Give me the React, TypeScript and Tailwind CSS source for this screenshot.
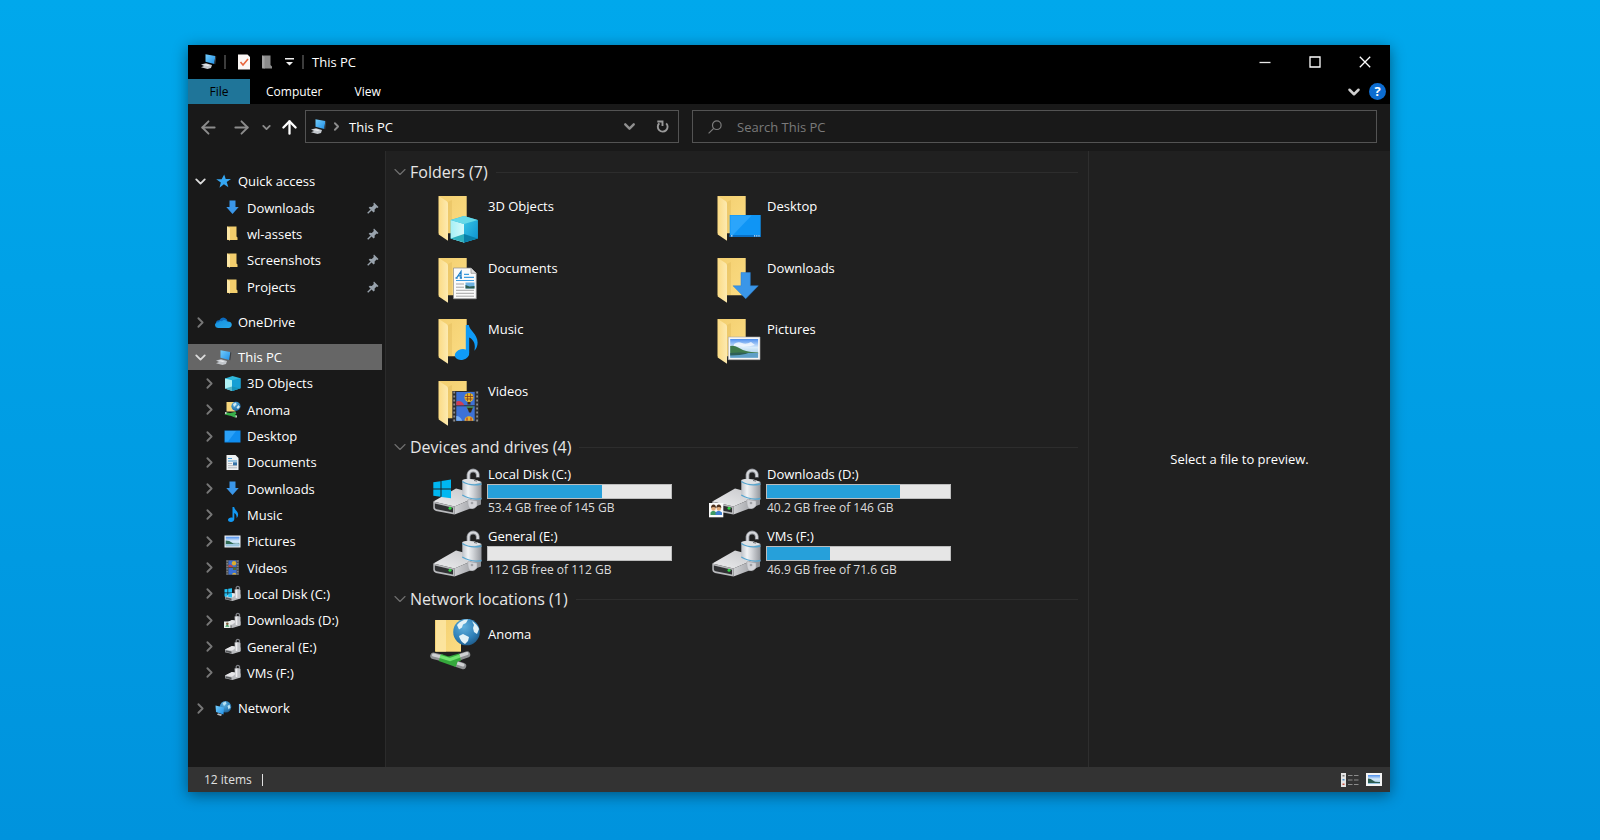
import { useState } from 'react';
import type { ReactNode } from 'react';
import { ArrowLeft, ArrowRight, ArrowUp, ChevronDown, ChevronRight } from 'lucide-react';

type IconName =
  | 'star'
  | 'arrow'
  | 'folder'
  | 'cloud'
  | 'pc'
  | 'cube'
  | 'share'
  | 'desktop'
  | 'document'
  | 'music'
  | 'picture'
  | 'video'
  | 'driveC'
  | 'driveD'
  | 'drive'
  | 'network';

type TreeItem = {
  label: string;
  icon: IconName;
  pinned?: boolean;
};

type TreeGroup = TreeItem & {
  open: boolean;
  height: string;
  children: TreeItem[];
};

const tree: TreeGroup[] = [
  {
    label: 'Quick access',
    icon: 'star',
    open: true,
    height: 'h-[132px]',
    children: [
      { label: 'Downloads', icon: 'arrow', pinned: true },
      { label: 'wl-assets', icon: 'folder', pinned: true },
      { label: 'Screenshots', icon: 'folder', pinned: true },
      { label: 'Projects', icon: 'folder', pinned: true },
    ],
  },
  { label: 'OneDrive', icon: 'cloud', open: false, height: 'h-[26px]', children: [] },
  {
    label: 'This PC',
    icon: 'pc',
    open: true,
    height: 'h-[342px]',
    children: [
      { label: '3D Objects', icon: 'cube' },
      { label: 'Anoma', icon: 'share' },
      { label: 'Desktop', icon: 'desktop' },
      { label: 'Documents', icon: 'document' },
      { label: 'Downloads', icon: 'arrow' },
      { label: 'Music', icon: 'music' },
      { label: 'Pictures', icon: 'picture' },
      { label: 'Videos', icon: 'video' },
      { label: 'Local Disk (C:)', icon: 'driveC' },
      { label: 'Downloads (D:)', icon: 'driveD' },
      { label: 'General (E:)', icon: 'drive' },
      { label: 'VMs (F:)', icon: 'drive' },
    ],
  },
  { label: 'Network', icon: 'network', open: false, height: 'h-[26px]', children: [] },
];

const folders: { label: string; art: ReactNode }[] = [
  { label: '3D Objects', art: <CubeArt /> },
  { label: 'Desktop', art: <DesktopArt /> },
  { label: 'Documents', art: <DocumentArt /> },
  { label: 'Downloads', art: <path d="M34 18.5h9.3v13.3h8L38.700 44.800 26 31.800h8z" fill="#3a96e8" stroke="#2b7fd0" strokeWidth=".5" /> },
  { label: 'Music', art: <MusicArt /> },
  { label: 'Pictures', art: <PictureArt /> },
  { label: 'Videos', art: <VideoArt /> },
];

const drives = [
  { label: 'Local Disk (C:)', detail: '53.4 GB free of 145 GB', used: 62.5, badge: 'windows' },
  { label: 'Downloads (D:)', detail: '40.2 GB free of 146 GB', used: 72.6, badge: 'shared' },
  { label: 'General (E:)', detail: '112 GB free of 112 GB', used: 0, badge: '' },
  { label: 'VMs (F:)', detail: '46.9 GB free of 71.6 GB', used: 34.5, badge: '' },
];

function Gradients() {
  return (
    <svg width="0" height="0" className="absolute" aria-hidden="true">
      <defs>
        <linearGradient id="folderBack" x1="0" y1="0" x2="1" y2="1">
          <stop offset="0" stopColor="#f3cf70" />
          <stop offset="1" stopColor="#fbdc83" />
        </linearGradient>
        <linearGradient id="folderFlap" x1="0" y1="0" x2="1" y2="0">
          <stop offset="0" stopColor="#fbdb85" />
          <stop offset="1" stopColor="#fdeab0" />
        </linearGradient>
        <linearGradient id="cubeLeft" x1="0" y1="0" x2="1" y2="0">
          <stop offset="0" stopColor="#a5f0f6" />
          <stop offset="1" stopColor="#d6fafa" />
        </linearGradient>
        <linearGradient id="cubeRight" x1="0" y1="0" x2="1" y2="1">
          <stop offset="0" stopColor="#37c3e4" />
          <stop offset="1" stopColor="#0b90cf" />
        </linearGradient>
        <linearGradient id="steelTop" x1="0" y1="1" x2="1" y2="0">
          <stop offset="0" stopColor="#ececee" />
          <stop offset="1" stopColor="#c4c5c8" />
        </linearGradient>
        <linearGradient id="steelSide" x1="0" y1="0" x2="1" y2="0">
          <stop offset="0" stopColor="#d0d1d4" />
          <stop offset="1" stopColor="#8f9196" />
        </linearGradient>
        <linearGradient id="lockBody" x1="0" y1="0" x2="1" y2="0">
          <stop offset="0" stopColor="#bfc3c9" />
          <stop offset=".3" stopColor="#f1f3f5" />
          <stop offset=".55" stopColor="#d3d6da" />
          <stop offset="1" stopColor="#94979d" />
        </linearGradient>
        <radialGradient id="globe" cx=".4" cy=".3" r=".8">
          <stop offset="0" stopColor="#5fb0dd" />
          <stop offset=".6" stopColor="#2f80b8" />
          <stop offset="1" stopColor="#1c5583" />
        </radialGradient>
        <linearGradient id="sky" x1="0" y1="0" x2="0" y2="1">
          <stop offset="0" stopColor="#4d8fee" />
          <stop offset=".45" stopColor="#d9ecfb" />
          <stop offset="1" stopColor="#8fc0de" />
        </linearGradient>
        <linearGradient id="screen" x1="0" y1="0" x2="1" y2="1">
          <stop offset="0" stopColor="#75cdfb" />
          <stop offset="1" stopColor="#1f8fe6" />
        </linearGradient>
        <linearGradient id="cloudFront" x1="0" y1="0" x2="1" y2="1">
          <stop offset="0" stopColor="#1490df" />
          <stop offset="1" stopColor="#28a8ea" />
        </linearGradient>
      </defs>
    </svg>
  );
}

function FolderArt() {
  return (
    <>
      <path d="M10.700 4H38.700V41.300H10.700z" fill="url(#folderBack)" />
      <path d="M20 10l4-2v33h-4z" fill="#dcb452" opacity=".35" />
      <path d="M10.700 4L18.500 9Q20 10 20 12V48.700L10.700 42.500z" fill="url(#folderFlap)" />
    </>
  );
}

function CubeArt() {
  return (
    <>
      <path d="M36 24L49.700 28v18.500L36 50.500 22.700 46.500V28z" fill="#2cb5d8" />
      <path d="M22.700 28L36 32v18.500l-13.300-4z" fill="url(#cubeLeft)" />
      <path d="M49.700 28L36 32v18.500l13.700-4z" fill="url(#cubeRight)" />
      <path d="M36 24l13.700 4L36 32 22.700 28z" fill="#66d9e8" />
      <path d="M22.700 46.500L36 42v8.500z" fill="#2fb0bd" />
      <path d="M49.700 46.500L36 42v8.500z" fill="#0a7fa8" />
    </>
  );
}

function DesktopArt() {
  return (
    <>
      <path d="M22.700 23h31v22h-31z" fill="#0f95f5" />
      <path d="M23.500 23.500h21L26 43h-2.500z" fill="#2ba5fb" />
      <path d="M22.700 43h31v2h-31z" fill="#0a6fc4" />
      <path d="M24 43.300h1.500v1.200H24zM47 43.300h1.200v1.200H47zM49.200 43.300h1.200v1.200h-1.200zM51.400 43.300h1.200v1.200h-1.200z" fill="#d5ecff" />
    </>
  );
}

function DocumentArt() {
  return (
    <>
      <path d="M25.500 14H43l5.300 5.300V44.800H25.500z" fill="#fbfbfb" stroke="#8c8c8c" strokeWidth=".7" />
      <path d="M43 14v5.300h5.300" fill="#dedede" stroke="#8c8c8c" strokeWidth=".7" />
      <path d="M28.500 24l4.500-6.500V24M30 21.800h3M27.500 24h2.200M31.800 24h2.200" fill="none" stroke="#1d7fc9" strokeWidth="1.300" />
      <path d="M36 20.300h5M36 23.400h10M28 26.500h18" stroke="#3f9de0" strokeWidth="1.200" />
      <path d="M28 30h8M28 33.200h8M28 36.300h18M28 39.300h18M28 42.200h18" stroke="#a5a5a5" strokeWidth="1" />
      <path d="M37.500 28.500H46.500v6h-9z" fill="#6fb2e2" />
      <path d="M37.500 31l4 1.500 5-.5v2.500h-9z" fill="#2d5c4e" />
    </>
  );
}

function MusicArt() {
  return (
    <g fill="#0f9bf7">
      <ellipse cx="34" cy="39.500" rx="7.300" ry="5.300" transform="rotate(-12 34 39.500)" />
      <path d="M37.800 10h3c.4 5 8.700 9 8.800 17.500 0 3-1 6-3.200 8.300 1.200-5.500.2-10.600-5.200-13.300V38h-3.400z" />
    </g>
  );
}

function PictureArt() {
  return (
    <>
      <path d="M21.300 22H53V44.700H21.300z" fill="#f6f6f6" stroke="#a9a9a9" strokeWidth=".6" />
      <path d="M23.200 24h27.900v18.700H23.200z" fill="url(#sky)" />
      <path d="M27 29q4-3 8-1t9-1l4 3q-8 3-21 1z" fill="#fff" opacity=".75" />
      <path d="M23.200 31q4-1 8 1.500t8 3.500 12 1.500v1H23.200z" fill="#3f7a4c" />
      <path d="M23.200 38h27.900v4.700H23.200z" fill="#5f9fc6" />
      <path d="M23.200 38q12-1 18 .5-8 2-18 2z" fill="#2e5f56" />
    </>
  );
}

function VideoArt() {
  return (
    <>
      <path d="M24.300 14H51v30.300H24.300z" fill="#2e2e2e" />
      <path d="M26.200 14.500v30M49.100 14.500v30" stroke="#8b8b8b" strokeWidth="1.800" strokeDasharray="2 2" />
      <path d="M28.300 15h18.400v13.200H28.300zM28.300 29.200h18.400v14.600H28.300z" fill="#3e72d6" />
      <path d="M28.300 24.500q5-2 8 3.700h-8z" fill="#d13f55" />
      <circle cx="41" cy="20.500" r="4.500" fill="#e8b526" />
      <path d="M37 19.500h8M37.500 22h7" stroke="#a2442c" strokeWidth="1.200" />
      <path d="M39.500 16.500v7.500M42.500 16.500v7.500" stroke="#704a14" strokeWidth=".7" />
      <path d="M39.500 25h3v2.500h-3z" fill="#4a2d12" />
      <path d="M38.500 29.200h7q0 3-3.500 5-3.500-2-3.500-5z" fill="#42804b" />
      <path d="M39.500 31h5l-1.500 4.500h-2z" fill="#38280f" />
      <path d="M36.500 43.800a4.500 4.500 0 0 1 9 0z" fill="#e8b526" />
      <path d="M39 40.500v3.300M43 40.500v3.300" stroke="#b5352c" strokeWidth="1.200" />
      <path d="M28.300 39q4 0 6 4.800h-6z" fill="#7ab0f2" />
    </>
  );
}

function DriveArt({ badge }: { badge: string }) {
  return (
    <>
      {/* enclosure */}
      <path d="M5.300 35.500L28 22.500l25 6.500L26.500 40.500z" fill="url(#steelTop)" />
      <path d="M5.300 35.500l21.200 5v8L8 45q-2.700-.8-2.700-3z" fill="#b9babd" />
      <path d="M6.800 37.500l18.200 4.300v4.700L8.500 43.200q-1.700-.5-1.700-2z" fill="#2f3032" />
      <path d="M26.500 40.500L53 29v9.500L26.500 48.500z" fill="url(#steelSide)" />
      <circle cx="22" cy="42.300" r="1.500" fill="#2fd443" />
      {/* padlock */}
      <path d="M40.500 17V8.500a4.700 4.700 0 0 1 9.300 0V11.500" fill="none" stroke="#85888e" strokeWidth="3.800" />
      <path d="M40.500 17V8.500a4.700 4.700 0 0 1 9.300 0V11" fill="none" stroke="#d6d8dc" strokeWidth="2.200" />
      <path d="M34.300 14q9-2.500 19.200 2v17.500q-10 2-19.200-3.500z" fill="url(#lockBody)" />
      <path d="M34.300 14q9-2.500 19.200 2-3 2.500-10 1.500t-9.200-3.500z" fill="#dfe2e5" />
      <path d="M46 14.500l3 .6" stroke="#6b6e73" strokeWidth="1" />
      <path d="M34.300 15.500q8 5 19.200 2.500M34.300 29q9 5.500 19.200 3.500" fill="none" stroke="#56a5cf" strokeWidth="1.300" />
      <path d="M40 33.500l9 1.500v5q-3 4-7 2.500-2.500-2-2-9z" fill="#d3d4d8" stroke="#a2a4a8" strokeWidth=".5" />
      <circle cx="44" cy="37" r="1.300" fill="#a0a2a6" />
      {badge === 'windows' && (
        <path d="M5.300 16.200l7.200-1v7.300H5.300zM13.500 15l9.500-1.400v8.900h-9.500zM5.300 23.500h7.200v7.300l-7.200-1zM13.500 23.500H23v8.700l-9.500-1.300z" fill="#00b7f1" />
      )}
      {badge === 'shared' && (
        <>
          <path d="M2 37h14.300v14.300H2z" fill="#fafafa" />
          <path d="M3.500 49v-2.500q2.500-3.500 6 0V49z" fill="#3f9a62" />
          <path d="M8.500 49v-2.500q3-3.500 6.500 0V49z" fill="#3f7fd0" />
          <circle cx="6.500" cy="42.500" r="2.300" fill="#e0ac7d" />
          <circle cx="11.800" cy="42.500" r="2.300" fill="#e0ac7d" />
          <path d="M4 42q0-3.500 2.500-3.500T9 42q-2.500-2-5 0zM9.300 42q0-3.500 2.500-3.500t2.500 3.500q-2.500-2-5 0z" fill="#4b2f1c" />
        </>
      )}
    </>
  );
}

function NetworkFolderArt() {
  return (
    <>
      <path d="M7 1h26v31.700H7z" fill="url(#folderBack)" />
      <path d="M8 1h10v31.700H8z" fill="#fde9ac" opacity=".7" />
      <circle cx="38.500" cy="13" r="13.300" fill="url(#globe)" />
      <path d="M29 6q5-6 11-5.500l-2 3.500-3 1.500-1 3-3 2zM31 17l4-2 6 3-1 4-3 3q-5-3-6-8zM44 2q5 3 7 8l-2 5-3-2-1-4 1-3z" fill="#e2f2f7" />
      <path d="M5.500 36.800l7 1.700M32 37.800l7-2.300M29 45l6 2" stroke="#8e9092" strokeWidth="6.500" strokeLinecap="round" />
      <path d="M5.500 36l7 1.700M32 36.800l7-2.300M29 44l6 2" stroke="#cfd1d3" strokeWidth="3" strokeLinecap="round" />
      <path d="M12 38.500l17 6M20 41.500l12-3.500" stroke="#35a83c" strokeWidth="7.500" fill="none" />
      <path d="M12 37.500l10 3 10-3.500" stroke="#6fe26e" strokeWidth="3.200" fill="none" />
    </>
  );
}

const smallIcons: Record<IconName, ReactNode> = {
  star: <path d="M9.200 1.500l1.500 4.600 5.300-.2-4.300 3.200 1.700 5.100-4.500-2.900-4.400 3.400 1.300-5.300L1.200 6.300l5.400-.1z" fill="#35a7f3" />,
  arrow: <path d="M5.500 1.500h6v6.500h3.200l-6.200 7-6.200-7h3.200z" fill="#3a96e8" />,
  folder: (
    <>
      <path d="M3 1.500h9.500v10l1 1v2.500H3z" fill="#f2cd6c" />
      <path d="M3 1.500l3 1.700v12.500L3 14z" fill="#fce6a4" />
    </>
  ),
  cloud: (
    <>
      <path d="M1 9.500Q1 6 4.300 6.300 6.500 2.500 10 4q2.500 1 2.700 4z" fill="#0b6bbf" />
      <path d="M3 14q-3.200-.5-3-3.500Q.5 8 3.500 8.200 5 6.500 7 7.300q2-2.500 5 .2 4.500-.3 4.800 3.200-.2 3-3.300 3.300z" fill="url(#cloudFront)" />
    </>
  ),
  pc: (
    <>
      <path d="M5.500 1.200l9.800 1.900-1 8-8.800-2.300z" fill="url(#screen)" />
      <path d="M15.300 3.100l1 .7-1 7.500-1-.2z" fill="#3b3f45" />
      <path d="M1 11.500l5-1.200 6 1.600-1 3-3.500 1L1 14.300l3-1.300z" fill="#c3c7cc" />
      <path d="M3 11.800l3-.6 4 1-2.500.8z" fill="#eceef0" />
    </>
  ),
  cube: (
    <>
      <path d="M1 3.500L8.500 1l8 2.300v10l-8 2.700L1 13.500z" fill="#2fb8dc" />
      <path d="M1 3.500l7 1.800V16l-7-2.500z" fill="#aef1f5" />
      <path d="M16.500 3.300L8 5.300V16l8.500-2.700z" fill="#159fd5" />
      <path d="M1 13.500l7-2 8.500 2L8 16z" fill="#168ba8" opacity=".6" />
    </>
  ),
  share: (
    <>
      <path d="M2.500 1h9v9.500h-9z" fill="#f6d67d" />
      <circle cx="12" cy="5.300" r="4.600" fill="url(#globe)" />
      <path d="M9 3l3-1.500.5 2L10 6zM12.500 6.500l2-2.500 1.500 2-2 2z" fill="#d2eaf4" />
      <path d="M1 12.200l5 1.300 6-1.600M7 13.500l5 2" stroke="#37b04a" strokeWidth="2.500" fill="none" />
      <path d="M1 12h1.500M11.500 15.500H13" stroke="#c9c9c9" strokeWidth="2" />
    </>
  ),
  desktop: (
    <>
      <path d="M.5 2.500h16v12H.5z" fill="#0f8def" />
      <path d="M1 3h11L4 13.500H1z" fill="#2ba1f8" />
    </>
  ),
  document: (
    <>
      <path d="M2.500 1h9l3 3v12h-12z" fill="#eef1f3" />
      <path d="M4 4.500h4M4 7h9" stroke="#4a9fd6" strokeWidth="1.200" />
      <path d="M4 9.500h4M4 11.700h9M4 13.800h9" stroke="#a9b0b5" strokeWidth=".9" />
      <path d="M9 8.300h4v3H9z" fill="#3573a8" />
    </>
  ),
  music: <path d="M8.500 1h1.700c.2 3 3.900 4.300 3.900 7.500 0 1.400-.5 2.500-1.500 3.700.2-2.500-.4-4.200-2.300-5.200V13c0 1.800-1.600 3-3.300 3S4 15.200 4 13.800s1.500-2.400 3.200-2.400c.5 0 .9.100 1.300.3z" fill="#1299f4" />,
  picture: (
    <>
      <path d="M.5 2.500h16v12H.5z" fill="#eef2f6" />
      <path d="M1.700 3.700h13.600v9.600H1.700z" fill="url(#sky)" />
      <path d="M1.700 7.500q4 0 6 2t7.600 1v1H1.700z" fill="#2f6b55" />
      <path d="M1.700 11h13.600v2.300H1.700z" fill="#9cc6df" />
    </>
  ),
  video: (
    <>
      <path d="M2 1h13v15H2z" fill="#4b4b4b" />
      <path d="M3.200 1.500v14M13.800 1.500v14" stroke="#8a8a8a" strokeWidth="1.300" strokeDasharray="1.300 1.300" />
      <path d="M4.500 1.500h8v6.500h-8zM4.500 9h8v6.500h-8z" fill="#3c6fd0" />
      <circle cx="10" cy="4.300" r="2.200" fill="#dcae2d" />
      <path d="M4.500 6q3-1 5 2h-5z" fill="#c9433f" />
      <path d="M8 15.500a2.300 2.300 0 0 1 4.500 0z" fill="#dcae2d" />
      <path d="M9 8.500h3v2.500H9z" fill="#4d6b34" />
    </>
  ),
  driveC: (
    <>
      <SmallDrive />
      <path d="M.5 4.300l3-.4v3.600h-3zM4.200 3.800l3.800-.5v4.200H4.200zM.5 8.200h3v3.600l-3-.4zM4.200 8.200H8v4.200l-3.800-.5z" fill="#22c1f5" />
    </>
  ),
  driveD: (
    <>
      <SmallDrive />
      <path d="M0 9.500h6.500V16H0z" fill="#e9efe9" />
      <path d="M1.200 14.700q2-4 4.200 0z" fill="#3f9a62" />
      <circle cx="3.300" cy="11.700" r="1.300" fill="#7a5637" />
    </>
  ),
  drive: <SmallDrive />,
  network: (
    <>
      <circle cx="10.500" cy="6.800" r="5.800" fill="url(#globe)" />
      <path d="M7.500 3l3-1.500 1 2L9 6zM12.500 6l2-1.500 1 3-2 2z" fill="#b9e3f4" />
      <path d="M.5 5.500l8.500 2-.5 7L1 12z" fill="url(#screen)" />
      <path d="M3 13.200l4 1.300-1 1.500-4-1.200z" fill="#b5bcc2" />
    </>
  ),
};

function SmallDrive() {
  return (
    <>
      <path d="M1 11.500L8 8l8.500 1.500v4L8.500 16 1 14.300z" fill="#b9bbbe" />
      <path d="M1 11.500L8 8l5 1-5 3.700z" fill="#e6e6e8" />
      <path d="M1.500 12.300l6 1.200v1.700l-6-1.300z" fill="#55575a" />
      <path d="M12.200 5V2.700a1.700 1.700 0 0 1 3.300 0V5" fill="none" stroke="#808287" strokeWidth="1.300" />
      <path d="M10.500 4.500q3-1 6 .5v8q-3 1.500-5.500-.5z" fill="#c0c2c6" />
      <path d="M11.500 5h1.800v8h-1.500z" fill="#ededef" />
    </>
  );
}

function SmallIcon({ name }: { name: IconName }) {
  return (
    <svg width="17" height="17" viewBox="0 0 17 17" className="shrink-0" aria-hidden="true">
      {smallIcons[name]}
    </svg>
  );
}

function TileIcon({ children }: { children: ReactNode }) {
  return (
    <svg width="56" height="52" viewBox="0 0 56 52" className="shrink-0" aria-hidden="true">
      {children}
    </svg>
  );
}

function Pin() {
  return (
    <svg width="12" height="12" viewBox="0 0 12 12" className="mr-[3px] ml-auto shrink-0" aria-hidden="true">
      <path d="M7 .5L11.500 5l-1 .9-.9-.3-2 2 .1 2-1.100 1L1.700 5.800l1.100-1 2 .1 2-2-.4-1.300z" fill="#98a2ac" />
      <path d="M4.300 7.700L.7 11.300" stroke="#98a2ac" strokeWidth="1.400" />
    </svg>
  );
}

type TreeRowProps = {
  item: TreeItem;
  level: 0 | 1;
  open?: boolean;
  selected: boolean;
  onSelect: () => void;
};

function TreeRow({ item, level, open, selected, onSelect }: TreeRowProps) {
  return (
    <button
      onClick={onSelect}
      className={`mr-[3px] flex min-h-0 items-center text-left ${level === 0 ? 'pl-1' : 'pl-[13px]'} ${
        selected ? 'bg-[#666666]' : 'hover:bg-[#2a2a2a]'
      }`}
    >
      <span className="mr-[7px] flex w-4 shrink-0 justify-center">
        {open && <ChevronDown size={17} strokeWidth={2.6} className="shrink-0 text-[#dcdcdc]" />}
        {!open && !item.pinned && <ChevronRight size={17} strokeWidth={2.6} className="shrink-0 text-[#777777]" />}
      </span>
      <SmallIcon name={item.icon} />
      <span className="ml-1.5 whitespace-nowrap">{item.label}</span>
      {item.pinned && <Pin />}
    </button>
  );
}

type SectionProps = {
  title: string;
  height: string;
  children: ReactNode;
};

function Section({ title, height, children }: SectionProps) {
  return (
    <section>
      <h2 className="flex h-[26px] items-center text-base text-[#e6e6e6]">
        <ChevronDown size={20} strokeWidth={1.4} className="shrink-0 text-[#6e6e6e]" />
        <span className="whitespace-nowrap">{title}</span>
        <span className="ml-2 h-px flex-1 bg-[#2d2d2d]" />
      </h2>
      <div className={`mt-[3px] ml-[38px] grid auto-rows-fr grid-cols-[repeat(auto-fill,279px)] ${height}`}>
        {children}
      </div>
    </section>
  );
}

export default function App() {
  const [selected, setSelected] = useState('This PC');
  const [search, setSearch] = useState('');

  return (
    <div className="flex min-h-screen flex-col bg-linear-to-b from-[#00a8ec] to-[#0093dd] pt-[45px] pr-[210px] pb-12 pl-[188px] font-['Open_Sans','Noto_Sans',sans-serif] text-[13px] leading-4 text-white">
      <Gradients />
      <div className="flex flex-1 flex-col bg-[#191919] shadow-[0_3px_14px_rgba(0,0,0,0.45)]">
        <header className="bg-black">
          <div className="flex h-[34px] items-center pb-px pl-3">
            <SmallIcon name="pc" />
            <span className="ml-[7px] h-[14px] w-0.5 bg-[#3c3c3c]" />
            <button aria-label="Properties" className="ml-3">
              <svg width="12" height="16" viewBox="0 0 12 16">
                <path d="M0 .5h9.500l2.500 2.500v12.500H0z" fill="#fbf7f5" />
                <path d="M2.500 8l2.500 3 5-6" fill="none" stroke="#e8663c" strokeWidth="1.600" />
              </svg>
            </button>
            <button aria-label="New folder" className="ml-3">
              <svg width="11" height="14" viewBox="0 0 11 14">
                <path d="M0 .5h8.500v9.500l1.500 1.500v2H0z" fill="#8a8a8a" />
                <path d="M0 .5l2.500 1.300v12L0 12.500z" fill="#a3a3a3" />
              </svg>
            </button>
            <button aria-label="Customize Quick Access Toolbar" className="ml-3">
              <svg width="9" height="8" viewBox="0 0 9 8">
                <path d="M0 0h9v1.500H0zM1 4h7L4.500 7.500z" fill="#f0f0f0" />
              </svg>
            </button>
            <span className="mx-2 h-[14px] w-0.5 bg-[#3c3c3c]" />
            <h1>This PC</h1>
            <div className="ml-auto flex h-full">
              <button aria-label="Minimize" className="flex w-[50px] items-center justify-center">
                <svg width="12" height="12" viewBox="0 0 12 12" stroke="#e8e8e8" strokeWidth="1.300">
                  <path d="M.5 6.500h11" />
                </svg>
              </button>
              <button aria-label="Maximize" className="flex w-[50px] items-center justify-center">
                <svg width="12" height="12" viewBox="0 0 12 12" fill="none" stroke="#fff" strokeWidth="1.300">
                  <path d="M1 1h10v10H1z" />
                </svg>
              </button>
              <button aria-label="Close" className="flex w-[50px] items-center justify-center">
                <svg width="12" height="12" viewBox="0 0 12 12" stroke="#fff" strokeWidth="1.300">
                  <path d="M.8.800l10.400 10.400M11.200.8L.8 11.200" />
                </svg>
              </button>
            </div>
          </div>
          <nav className="flex h-[25px] items-center text-xs">
            <button className="h-full w-[62px] bg-[#1f7599] text-black">File</button>
            <button className="ml-4">Computer</button>
            <button className="ml-8">View</button>
            <button aria-label="Expand the Ribbon" className="ml-auto">
              <ChevronDown size={18} strokeWidth={3.4} className="text-[#cfcfcf]" />
            </button>
            <button
              aria-label="Help"
              className="mr-1 ml-[6px] h-[17px] w-[17px] rounded-full bg-[#0c6cd0] text-[13px] font-bold"
            >
              ?
            </button>
          </nav>
        </header>

        <div className="flex h-[47px] items-start bg-[#191919] pt-[6px] pr-[13px] pl-[10px]">
          <div className="flex h-[34px] w-[107px] shrink-0 items-center">
            <button aria-label="Back">
              <ArrowLeft size={21} strokeWidth={2.2} className="text-[#8c8c8c]" />
            </button>
            <button aria-label="Forward" className="ml-3">
              <ArrowRight size={21} strokeWidth={2.2} className="text-[#8c8c8c]" />
            </button>
            <button aria-label="Recent locations" className="ml-2">
              <ChevronDown size={13} strokeWidth={3.4} className="text-[#8c8c8c]" />
            </button>
            <button aria-label="Up" className="ml-[6px]">
              <ArrowUp size={21} strokeWidth={2.6} className="text-white" />
            </button>
          </div>
          <div className="flex h-[33px] w-[374px] shrink-0 items-center border border-[#535353] pl-1">
            <SmallIcon name="pc" />
            <ChevronRight size={13} strokeWidth={3.4} className="ml-[3px] text-[#8c8c8c]" />
            <button className="ml-1.5">This PC</button>
            <button aria-label="Previous locations" className="ml-auto">
              <ChevronDown size={17} strokeWidth={3.4} className="text-[#8f8f8f]" />
            </button>
            <button aria-label="Refresh" className="mr-[9px] ml-[18px]">
              <svg width="13" height="13" viewBox="0 0 13 13" fill="none" stroke="#9a9a9a" strokeWidth="1.900">
                <path d="M10.200 3.300A4.900 4.900 0 1 1 3.300 3.200" />
                <path d="M1.300 1.500h5.200v4.500" />
              </svg>
            </button>
          </div>
          <label className="ml-[13px] flex h-[33px] flex-1 items-center border border-[#535353] pl-[15px]">
            <svg width="14" height="14" viewBox="0 0 14 14" fill="none" stroke="#7c7c7c" strokeWidth="1.200" aria-hidden="true">
              <circle cx="8.800" cy="5.200" r="4.300" />
              <path d="M5.700 8.300L.6 13.400" />
            </svg>
            <input
              type="text"
              aria-label="Search This PC"
              placeholder="Search This PC"
              value={search}
              onChange={(e) => setSearch(e.target.value)}
              className="ml-[15px] min-w-0 flex-1 bg-transparent outline-none placeholder:text-[#7a7a7a]"
            />
          </label>
        </div>

        <div className="flex flex-1">
          <nav aria-label="Folder tree" className="flex w-[198px] shrink-0 flex-col gap-[9px] border-r border-[#2b2b2b] pt-[17px]">
            {tree.map((group) => (
              <div key={group.label} className={`grid auto-rows-fr ${group.height}`}>
                <TreeRow
                  item={group}
                  level={0}
                  open={group.open}
                  selected={selected === group.label}
                  onSelect={() => setSelected(group.label)}
                />
                {group.children.map((child) => (
                  <TreeRow
                    key={child.label}
                    item={child}
                    level={1}
                    selected={selected === `${group.label}/${child.label}`}
                    onSelect={() => setSelected(`${group.label}/${child.label}`)}
                  />
                ))}
              </div>
            ))}
          </nav>

          <main className="flex-1 bg-[#202020] pt-2 pr-[10px] pl-1">
            <Section title="Folders (7)" height="h-[246px]">
              {folders.map((folder) => (
                <button key={folder.label} className="flex items-start pt-1 text-left">
                  <TileIcon>
                    <FolderArt />
                    {folder.art}
                  </TileIcon>
                  <span className="mt-1.5 ml-1">{folder.label}</span>
                </button>
              ))}
            </Section>

            <Section title="Devices and drives (4)" height="h-[123px]">
              {drives.map((drive) => (
                <button key={drive.label} className="flex items-start pt-[3px] text-left">
                  <TileIcon>
                    <DriveArt badge={drive.badge} />
                  </TileIcon>
                  <span className="ml-[3px] block w-[185px]">
                    <span className="block pl-px">{drive.label}</span>
                    <span className="mt-0.5 mb-px block h-[15px] border border-[#bcbcbc] bg-[#e6e6e6]">
                      <span className="block h-full bg-[#26a0da]" style={{ width: `${drive.used}%` }} />
                    </span>
                    <span className="block pl-px text-xs leading-4 text-[#dcdcdc]">{drive.detail}</span>
                  </span>
                </button>
              ))}
            </Section>

            <Section title="Network locations (1)" height="h-[61px]">
              <button className="flex items-start pt-1 text-left">
                <TileIcon>
                  <NetworkFolderArt />
                </TileIcon>
                <span className="mt-[7px] ml-1">Anoma</span>
              </button>
            </Section>
          </main>

          <aside className="flex w-[302px] shrink-0 items-center justify-center border-l border-[#2e2e2e] bg-[#202020]">
            <p>Select a file to preview.</p>
          </aside>
        </div>

        <footer className="flex h-[25px] items-center bg-[#333333] pr-2 pl-4 text-xs text-[#e0e0e0]">
          <span>12 items</span>
          <span className="ml-[10px] h-3 w-px bg-[#e0e0e0]" />
          <button aria-label="Details view" className="ml-auto">
            <svg width="18" height="14" viewBox="0 0 18 14">
              <path d="M0 0h5v14H0z" fill="#e4e4e4" />
              <path d="M1.500 2h2v1.500h-2z" fill="#777" />
              <path d="M1.500 6h2v1.500h-2z" fill="#4a90c8" />
              <path d="M1.500 10.500h2V12h-2z" fill="#c8513f" />
              <path d="M7 2.500h4.500M13 2.500h4.500M7 7h4.500M13 7h4.500M7 11.500h4.500M13 11.500h4.500" stroke="#8c8c8c" strokeWidth="1" />
            </svg>
          </button>
          <button aria-label="Large icons view" className="ml-[7px]">
            <svg width="16" height="13" viewBox="0 0 16 13">
              <path d="M0 0h16v13H0z" fill="#f4f4f4" />
              <path d="M2 2h12v9H2z" fill="url(#sky)" />
              <path d="M2 5.500q3 0 5 2t7 1.500v1H2z" fill="#2c5d52" />
            </svg>
          </button>
        </footer>
      </div>
    </div>
  );
}
